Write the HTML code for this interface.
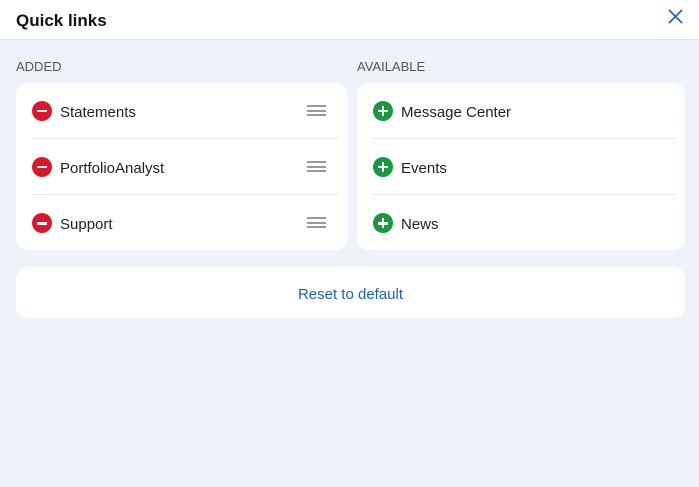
<!DOCTYPE html>
<html><head><style>
*{margin:0;padding:0;box-sizing:border-box}
body{width:699px;height:487px;background:#eef2f9;font-family:"Liberation Sans",sans-serif;position:relative;overflow:hidden;color:#222}
.hdr{position:absolute;left:0;top:0;width:699px;height:40px;background:#fff;border-bottom:1px solid #dde2ea}
.hdr h1{position:absolute;left:16px;top:11px;font-size:17px;font-weight:bold;color:#111}
.lbl{position:absolute;top:59px;font-size:13px;color:#555}
.card{position:absolute;background:#fff;border-radius:12px}
.row{position:absolute;left:16px;right:10px;height:56px;display:flex;align-items:center;font-size:15px;color:#222}
.row .t{padding-top:3px}
.row.sep{border-bottom:1px solid #e3e6ea}
.ic{width:20px;height:20px;border-radius:50%;margin-right:8px;position:relative;flex:none}
.ic.r{background:#d9192b}.ic.g{background:#16993f}
.ic:before{content:"";position:absolute;left:5px;top:9px;width:10px;height:2.5px;background:#fff}
.ic.g:after{content:"";position:absolute;left:8.8px;top:5px;width:2.5px;height:10px;background:#fff}
.hb{position:absolute;right:12px;top:22px;width:19px;height:11px;border-top:2px solid #999;border-bottom:2px solid #999}
.hb:after{content:"";position:absolute;left:0;right:0;top:2.5px;height:2px;background:#999}
</style></head><body>
<div class="hdr"><h1>Quick links</h1>
<svg style="position:absolute;left:668px;top:9px" width="15" height="15" viewBox="0 0 16 16"><path d="M1 1L15 15M15 1L1 15" stroke="#1a5fc4" stroke-width="1.8" fill="none"/></svg></div>
<div class="lbl" style="left:16px">ADDED</div>
<div class="lbl" style="left:357px">AVAILABLE</div>
<div class="card" style="left:16px;top:83px;width:332px;height:167px">
<div class="row sep" style="top:0"><span class="ic r"></span><span class="t">Statements</span><span class="hb"></span></div>
<div class="row sep" style="top:56px"><span class="ic r"></span><span class="t">PortfolioAnalyst</span><span class="hb"></span></div>
<div class="row" style="top:112px"><span class="ic r"></span><span class="t">Support</span><span class="hb"></span></div>
</div>
<div class="card" style="left:357px;top:83px;width:328px;height:167px">
<div class="row sep" style="top:0"><span class="ic g"></span><span class="t">Message Center</span></div>
<div class="row sep" style="top:56px"><span class="ic g"></span><span class="t">Events</span></div>
<div class="row" style="top:112px"><span class="ic g"></span><span class="t">News</span></div>
</div>
<div class="card" style="left:16px;top:267px;width:669px;height:51px;text-align:center;line-height:55px;font-size:15px;color:#1a5fc4">Reset to default</div>
</body></html>
